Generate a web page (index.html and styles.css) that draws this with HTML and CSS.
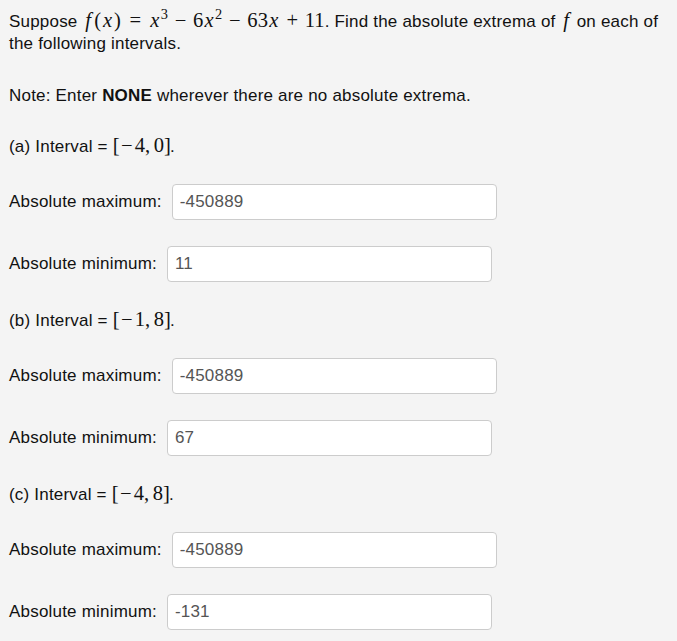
FILE: index.html
```html
<!DOCTYPE html>
<html lang="en">
<head>
  <meta charset="UTF-8" />
  <title>Absolute extrema</title>
  <link rel="stylesheet" href="styles.css">
</head>
<body>
  <div class="problem">
    <p class="intro">
      Suppose <span class="math"><i class="f">f</i><span class="par">(</span><i>x</i><span class="par">)</span><span class="rel">=</span><i>x</i><sup>3</sup><span class="op">−</span>6<i>x</i><sup>2</sup><span class="op">−</span>63<i>x</i><span class="op">+</span>11</span>. Find the absolute extrema of <span class="math"><i class="f">f</i></span> on each of the following intervals.
    </p>
    <p class="note">Note: Enter <b>NONE</b> wherever there are no absolute extrema.</p>

    <div class="part">
      <p class="interval">(a) Interval = <span class="math"><span class="br">[</span><span class="neg">−</span>4,<span class="thin"></span>0<span class="br">]</span></span>.</p>
      <div class="row">
        <label for="maxA">Absolute maximum:</label>
        <input type="text" id="maxA" value="-450889" />
      </div>
      <div class="row">
        <label for="minA">Absolute minimum:</label>
        <input type="text" id="minA" value="11" />
      </div>
    </div>

    <div class="part">
      <p class="interval">(b) Interval = <span class="math"><span class="br">[</span><span class="neg">−</span>1,<span class="thin"></span>8<span class="br">]</span></span>.</p>
      <div class="row">
        <label for="maxB">Absolute maximum:</label>
        <input type="text" id="maxB" value="-450889" />
      </div>
      <div class="row">
        <label for="minB">Absolute minimum:</label>
        <input type="text" id="minB" value="67" />
      </div>
    </div>

    <div class="part">
      <p class="interval">(c) Interval = <span class="math"><span class="br">[</span><span class="neg">−</span>4,<span class="thin"></span>8<span class="br">]</span></span>.</p>
      <div class="row">
        <label for="maxC">Absolute maximum:</label>
        <input type="text" id="maxC" value="-450889" />
      </div>
      <div class="row">
        <label for="minC">Absolute minimum:</label>
        <input type="text" id="minC" value="-131" />
      </div>
    </div>
  </div>
</body>
</html>
```

FILE: styles.css
```css
body {
  margin: 0;
  background: #f4f4f4;
  font-family: "Liberation Sans", Arial, sans-serif;
  font-size: 17px;
  letter-spacing: 0.2px;
  color: #111;
}
.problem {
  padding: 11px 9px;
}
p {
  margin: 0;
}
.intro {
  line-height: 22px;
}
.note {
  margin: 31px 0;
  line-height: 20px;
}

/* math, spaced like KaTeX */
.math {
  font-family: "Liberation Serif", "Times New Roman", serif;
  font-size: 1.21em;
  letter-spacing: 0;
  line-height: 0;
}
.math i,
.math .par,
.math .op,
.math .rel,
.math .neg,
.math .br {
  display: inline-block;
  text-align: center;
  line-height: 0;
}
.math i {
  font-style: italic;
  width: 0.572em;
}
.math i.f {
  width: 0.55em;
}
.math .par {
  width: 0.389em;
}
.math .br {
  width: 0.3em;
}
.math .op,
.math .rel,
.math .neg {
  width: 0.778em;
}
.math .op {
  margin: 0 0.222em;
}
.math .rel {
  margin: 0 0.278em;
}
.math sup {
  font-size: 0.7em;
  line-height: 0;
  vertical-align: 0.55em;
}
.math .thin {
  display: inline-block;
  width: 0.167em;
}

.part {
  margin-top: 29px;
}
.interval {
  line-height: 20px;
  margin-bottom: 27px;
}
.row {
  display: flex;
  align-items: center;
  gap: 10px;
}
.row + .row {
  margin-top: 26px;
}
.row input {
  box-sizing: border-box;
  width: 325px;
  height: 36px;
  padding: 0 7px;
  border: 1px solid #ccc;
  border-radius: 4px;
  background: #fff;
  color: #555;
  font-family: "Liberation Sans", Arial, sans-serif;
  font-size: 17px;
  letter-spacing: 0.2px;
}
```
